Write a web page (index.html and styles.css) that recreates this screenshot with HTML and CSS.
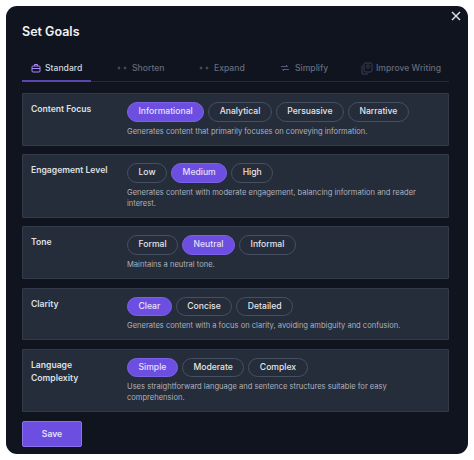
FILE: index.html
```html
<!DOCTYPE html>
<html lang="en">
<head>
    <meta charset="UTF-8">
    <title>Set Goals</title>
    <link rel="stylesheet" href="styles.css">
</head>
<body>
    <div class="modal">
        <button class="close" aria-label="Close">
            <svg width="10" height="10" viewBox="0 0 10 10"><path d="M1 1l8 8M9 1l-8 8" stroke="#e4e6ea" stroke-width="1.4" fill="none"/></svg>
        </button>
        <h1>Set Goals</h1>

        <div class="tabs">
            <div class="tab active">
                <svg width="10" height="10" viewBox="0 0 10 10" fill="none" stroke="#a78bfa" stroke-width="1"><rect x="1" y="3" width="8" height="6" rx="1"/><path d="M3.5 3V1.5h3V3M1 5.5h8"/></svg>
                Standard
            </div>
            <div class="tab tab-shorten">
                <svg width="12" height="8" viewBox="0 0 12 8" fill="#565c7e"><path d="M3 2l.6 1.400 1.400.6-1.400.6L3 6l-.6-1.400L1 4l1.400-.6zM9 2l.6 1.400 1.400.6-1.400.6L9 6l-.6-1.400L7 4l1.400-.6z"/></svg>
                Shorten
            </div>
            <div class="tab tab-expand">
                <svg width="12" height="8" viewBox="0 0 12 8" fill="#565c7e"><path d="M3 2l.6 1.400 1.400.6-1.400.6L3 6l-.6-1.400L1 4l1.400-.6zM9 2l.6 1.400 1.400.6-1.400.6L9 6l-.6-1.400L7 4l1.400-.6z"/></svg>
                Expand
            </div>
            <div class="tab tab-simplify">
                <svg width="8" height="8" viewBox="0 0 8 8" fill="none" stroke="#5b5488" stroke-width="1"><path d="M0 2.500h6.500L5 1M8 5.500H1.500L3 7"/></svg>
                Simplify
            </div>
            <div class="tab tab-improve">
                <svg width="12" height="13" viewBox="0 0 12 13" fill="none" stroke="#3f3f5c" stroke-width="1"><rect x="3" y="1" width="8" height="9" rx="1.500"/><path d="M1 3.500V12h6"/><circle cx="7" cy="4.500" r="1.500"/></svg>
                Improve Writing
            </div>
        </div>

        <div class="goal">
            <div class="goal-label">Content Focus</div>
            <div class="goal-body">
                <div class="pills">
                    <span class="pill selected">Informational</span>
                    <span class="pill">Analytical</span>
                    <span class="pill">Persuasive</span>
                    <span class="pill">Narrative</span>
                </div>
                <p>Generates content that primarily focuses on conveying information.</p>
            </div>
        </div>

        <div class="goal goal-tall">
            <div class="goal-label">Engagement Level</div>
            <div class="goal-body">
                <div class="pills">
                    <span class="pill">Low</span>
                    <span class="pill selected">Medium</span>
                    <span class="pill">High</span>
                </div>
                <p>Generates content with moderate engagement, balancing information and reader interest.</p>
            </div>
        </div>

        <div class="goal">
            <div class="goal-label">Tone</div>
            <div class="goal-body">
                <div class="pills">
                    <span class="pill">Formal</span>
                    <span class="pill selected">Neutral</span>
                    <span class="pill">Informal</span>
                </div>
                <p>Maintains a neutral tone.</p>
            </div>
        </div>

        <div class="goal">
            <div class="goal-label">Clarity</div>
            <div class="goal-body">
                <div class="pills">
                    <span class="pill selected">Clear</span>
                    <span class="pill">Concise</span>
                    <span class="pill">Detailed</span>
                </div>
                <p>Generates content with a focus on clarity, avoiding ambiguity and confusion.</p>
            </div>
        </div>

        <div class="goal goal-tall">
            <div class="goal-label">Language Complexity</div>
            <div class="goal-body">
                <div class="pills">
                    <span class="pill selected">Simple</span>
                    <span class="pill">Moderate</span>
                    <span class="pill">Complex</span>
                </div>
                <p>Uses straightforward language and sentence structures suitable for easy comprehension.</p>
            </div>
        </div>

        <button class="save">Save</button>
    </div>
</body>
</html>
```

FILE: styles.css
```css
body {
    margin: 0;
    padding: 6px;
    background-color: #fff;
    font-family: 'Inter', sans-serif;
}

.modal {
    position: relative;
    box-sizing: border-box;
    width: 462px;
    height: 448px;
    padding: 17px 19px 0 16px;
    background-color: #0f141f;
    border-radius: 11px;
    color: #e4e6ea;
}

.close {
    position: absolute;
    top: 5px;
    right: 7px;
    padding: 0;
    border: none;
    background: none;
    line-height: 0;
}

h1 {
    margin: 0;
    font-size: 12.5px;
    line-height: 18px;
    font-weight: 600;
    color: #f0f1f4;
}

.tabs {
    display: flex;
    align-items: center;
    height: 27px;
    box-sizing: border-box;
    margin: 14px 0 11px;
    border-bottom: 1px solid #262b3a;
    font-size: 8.6px;
    font-weight: 500;
    color: #666b7a;
}

.tab {
    display: flex;
    align-items: center;
    gap: 4px;
    height: 26px;
    box-sizing: border-box;
    white-space: nowrap;
}

.tab.active {
    width: 69px;
    height: 27px;
    padding-left: 9px;
    margin-bottom: -1px;
    border-bottom: 2px solid #5b46b0;
    color: #d4d6dc;
}

.tab-shorten { margin-left: 25px; width: 82px; }
.tab-expand { width: 83px; }
.tab-simplify { width: 80px; gap: 6px; }
.tab-improve { gap: 3px; }

.goal {
    display: flex;
    box-sizing: border-box;
    height: 52.5px;
    margin-bottom: 8.7px;
    padding: 8px 8px;
    background-color: #252c3a;
    border: 1px solid #333a49;
    border-radius: 1px;
}

.goal-tall {
    height: 63.5px;
}

.goal-label {
    width: 96px;
    flex-shrink: 0;
    box-sizing: border-box;
    padding: 1px 10px 0 0;
    font-size: 8.6px;
    line-height: 13.5px;
    font-weight: 600;
    color: #dfe1e6;
}

.goal-body {
    flex: 1;
}

.pills {
    display: flex;
    gap: 4px;
}

.pill {
    box-sizing: border-box;
    height: 19.5px;
    padding: 0 10.5px;
    border: 1px solid #465062;
    border-radius: 10px;
    font-size: 8.6px;
    line-height: 17.5px;
    font-weight: 500;
    color: #e4e6ea;
}

.pill.selected {
    background-color: #6c4fe0;
    border-color: #7c62e8;
    color: #e6e0fb;
}

p {
    margin: 4px 0 0;
    font-size: 7.57px;
    line-height: 11px;
    color: #aeb2bc;
}

.save {
    display: block;
    width: 60px;
    height: 26px;
    padding: 0;
    background-color: #6c4fe0;
    border: 1px solid #8a72ec;
    border-radius: 2px;
    font-family: inherit;
    font-size: 8.6px;
    font-weight: 600;
    color: #e6e0fb;
}
```
